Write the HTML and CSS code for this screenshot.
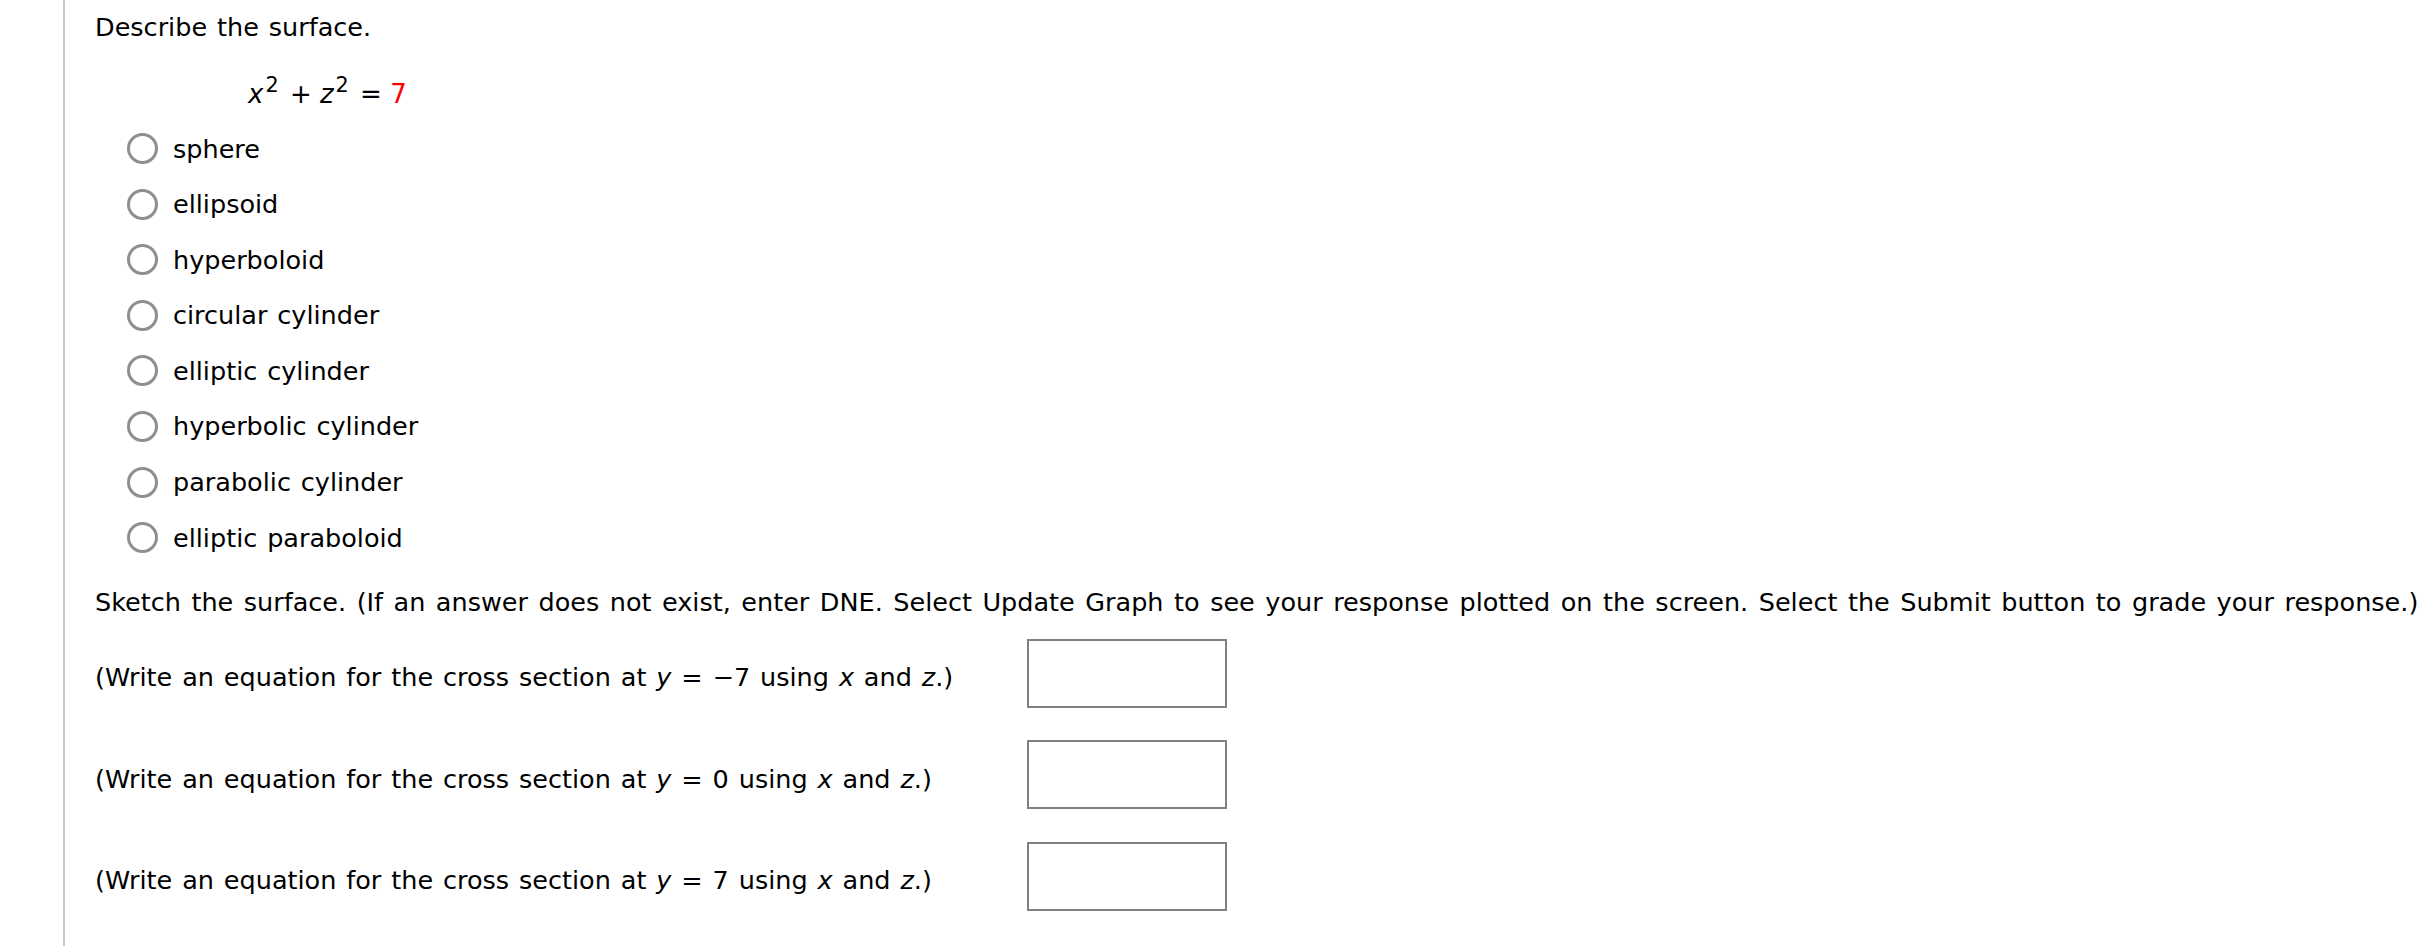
FILE: index.html
```html
<!DOCTYPE html>
<html lang="en">
<head>
<meta charset="utf-8">
<title>Describe the surface</title>
<link rel="stylesheet" href="styles.css">
</head>
<body>
<div class="page">
  <div class="question">
    <p class="prompt">Describe the surface.</p>
    <div class="equation"><i>x</i><sup>2</sup> + <i>z</i><sup>2</sup> = <span class="given">7</span></div>
    <ul class="choices">
      <li class="choice"><span class="radio"></span><span class="label">sphere</span></li>
      <li class="choice"><span class="radio"></span><span class="label">ellipsoid</span></li>
      <li class="choice"><span class="radio"></span><span class="label">hyperboloid</span></li>
      <li class="choice"><span class="radio"></span><span class="label">circular cylinder</span></li>
      <li class="choice"><span class="radio"></span><span class="label">elliptic cylinder</span></li>
      <li class="choice"><span class="radio"></span><span class="label">hyperbolic cylinder</span></li>
      <li class="choice"><span class="radio"></span><span class="label">parabolic cylinder</span></li>
      <li class="choice"><span class="radio"></span><span class="label">elliptic paraboloid</span></li>
    </ul>
    <p class="prompt sketch">Sketch the surface. (If an answer does not exist, enter DNE. Select Update Graph to see your response plotted on the screen. Select the Submit button to grade your response.)</p>
    <div class="cross-sections">
      <span class="cs-label">(Write an equation for the cross section at <i>y</i> = &minus;7 using <i>x</i> and <i>z</i>.)</span>
      <input class="answer-box" type="text">
      <span class="cs-label">(Write an equation for the cross section at <i>y</i> = 0 using <i>x</i> and <i>z</i>.)</span>
      <input class="answer-box" type="text">
      <span class="cs-label">(Write an equation for the cross section at <i>y</i> = 7 using <i>x</i> and <i>z</i>.)</span>
      <input class="answer-box" type="text">
    </div>
  </div>
</div>
</body>
</html>
```

FILE: styles.css
```css
html, body {
  margin: 0;
  padding: 0;
  background: #fff;
}

body {
  font-family: "DejaVu Sans", Verdana, sans-serif;
  font-size: 25.5px;
  line-height: 36px;
  word-spacing: 1.8px;
  color: #000;
}

.page {
  margin-left: 63px;
  border-left: 2px solid #c8c8c8;
  min-height: 946px;
  box-sizing: border-box;
  padding: 9px 0 0 30px;
}

.prompt {
  margin: 0;
  white-space: nowrap;
}

.equation {
  margin: 31px 0 0 153px;
  white-space: nowrap;
  font-size: 26px;
  word-spacing: 0;
}

.equation sup {
  font-size: 80%;
  line-height: 0;
  vertical-align: 11px;
  margin-left: 2px;
  margin-right: 3px;
}

.given {
  color: #f00;
}

.choices {
  list-style: none;
  margin: 18.5px 0 0 32px;
  padding: 0;
  display: flex;
  flex-direction: column;
  gap: 19.6px;
}

.choice {
  display: flex;
  align-items: center;
  height: 36px;
}

.radio {
  width: 31px;
  height: 31px;
  box-sizing: border-box;
  border: 3px solid #8f8f8f;
  border-radius: 50%;
  flex: none;
  margin-right: 15px;
}

.sketch {
  margin-top: 28.5px;
  word-spacing: 2.4px;
}

.cross-sections {
  margin-top: 18.6px;
  display: grid;
  grid-template-columns: 932px 200px;
  grid-auto-rows: 69px;
  row-gap: 32.5px;
  align-items: center;
}

.cs-label {
  white-space: nowrap;
  padding-top: 8px;
}

.answer-box {
  width: 200px;
  height: 69px;
  box-sizing: border-box;
  border: 2px solid #808080;
  border-radius: 0;
  margin: 0;
  padding: 0 6px;
  font: inherit;
  background: #fff;
  outline: none;
}
```
